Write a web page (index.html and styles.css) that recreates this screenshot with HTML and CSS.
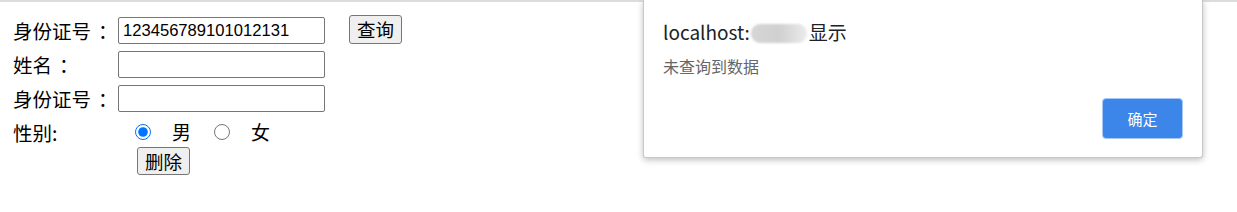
FILE: index.html
```html
<!DOCTYPE html>
<html lang="zh">
<head>
<meta charset="utf-8">
<title>查询</title>
<link rel="stylesheet" href="styles.css">
</head>
<body>
<div class="topline"></div>
<div class="form">
  <div class="row">
    <span class="label">身份证号<span class="colon">：</span></span>
    <input class="field" type="text" value="123456789101012131">
    <button class="btn query">查询</button>
  </div>
  <div class="row">
    <span class="label">姓名<span class="colon">：</span></span>
    <input class="field" type="text">
  </div>
  <div class="row">
    <span class="label">身份证号<span class="colon">：</span></span>
    <input class="field" type="text">
  </div>
  <div class="row gender">
    <span class="label">性别:</span>
    <div class="radios">
      <input class="radio" type="radio" name="sex" checked>
      <span class="opt">男</span>
      <input class="radio" type="radio" name="sex">
      <span class="opt">女</span>
    </div>
  </div>
  <div class="row action">
    <button class="btn del">删除</button>
  </div>
</div>

<div class="dialog">
  <div class="d-title">localhost:<span class="blur"></span>显示</div>
  <div class="d-msg">未查询到数据</div>
  <div class="d-foot"><button class="ok">确定</button></div>
</div>
</body>
</html>
```
FILE: styles.css
```css
html, body { margin: 0; padding: 0; background: #fff; }
body {
  width: 1237px; height: 212px; overflow: hidden; position: relative;
  font-family: "Noto Sans CJK SC", "Liberation Sans", sans-serif;
  color: #000;
}
.topline { height: 2px; background: #dcdcdc; }
.form { padding: 15px 0 0 13px; display: flex; flex-direction: column; }
.row { display: flex; align-items: center; height: 27px; margin-bottom: 7px; }
.label { width: 105px; font-size: 19.5px; line-height: 27px; white-space: nowrap; }
.colon { padding-left: 7px; }
.field {
  box-sizing: border-box; width: 207px; height: 27px; margin: 0;
  border: 1px solid #767676; border-radius: 2px; padding: 0 4px;
  font-family: "Liberation Sans", Arial, sans-serif; font-size: 16.6px; color: #000;
}
.btn {
  box-sizing: border-box; height: 29px; padding: 0 4px; margin: 0;
  border: 1px solid #767676; border-radius: 3px; background: #efefef;
  font-family: "Noto Sans CJK SC", sans-serif; font-size: 18.5px; line-height: 27px; color: #000;
}
.query { margin-left: 24px; width: 53px; margin-top: -2px; }
.gender { height: 22px; margin-top: 2px; margin-bottom: 0; }
.radios { display: flex; align-items: center; padding-left: 17px; }
.radio { margin: 0; width: 16px; height: 16px; accent-color: #0075ff; }
.opt { font-size: 19px; margin-left: 21px; margin-right: 23px; line-height: 22px; }
.opt:last-child { margin-right: 0; }
.action { padding-left: 124px; height: 28px; margin-top: 4px; }
.del { width: 53px; height: 28px; }

.dialog {
  position: absolute; left: 643px; top: 0; width: 560px; height: 158px;
  box-sizing: border-box; background: #fff;
  border: 1px solid #c8c8c8; border-top: none;
  border-radius: 0 0 3px 3px;
  box-shadow: 0 2px 6px rgba(0,0,0,0.25);
  padding: 18px 19px 0 19px;
}
.d-title { font-size: 19px; line-height: 28px; color: #202124; font-family: "Noto Sans CJK SC", "Liberation Sans", sans-serif; }
.blur {
  display: inline-block; width: 56px; height: 19px; vertical-align: -3px;
  background: linear-gradient(90deg, #d6d6d6, #d0d0d0 50%, #ececec);
  border-radius: 9px; filter: blur(1px); margin: 0 2px 0 1px;
}
.d-msg { margin-top: 9px; font-size: 16px; line-height: 22px; color: #666; }
.d-foot { display: flex; justify-content: flex-end; margin-top: 21px; }
.ok {
  width: 81px; height: 41px; border: 1px solid #a7c7f5; border-radius: 4px;
  background: #3c86e9; color: #fff; font-size: 15px;
  font-family: "Noto Sans CJK SC", sans-serif;
}
```
